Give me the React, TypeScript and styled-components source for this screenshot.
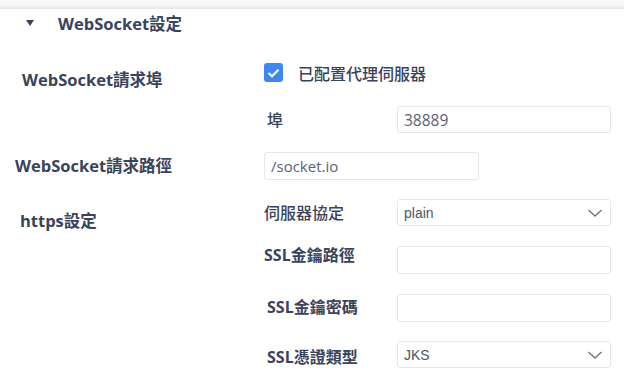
import React from "react";
import styled, { createGlobalStyle } from "styled-components";

const Global = createGlobalStyle`
  html, body { margin: 0; padding: 0; background: #fff; }
  body {
    font-family: "Open Sans", "Noto Sans CJK TC", sans-serif;
    color: #39435c;
  }
  * { box-sizing: border-box; }
`;

const Page = styled.div`
  width: 624px;
  height: 379px;
  overflow: hidden;
  background: #fff;
`;

const TopShade = styled.div`
  height: 9px;
  background: linear-gradient(to bottom, #fbfbfb 0%, #f3f3f3 60%, #e8e8e8 100%);
`;

const Header = styled.div`
  height: 29px;
  display: flex;
  align-items: center;
  padding-left: 26px;
  gap: 24px;
`;

const Caret = styled.span`
  width: 0;
  height: 0;
  border-left: 4.5px solid transparent;
  border-right: 4.5px solid transparent;
  border-top: 6px solid #39435c;
  margin-top: -2px;
`;

const HeaderTitle = styled.span`
  font-size: 16.5px;
  font-weight: 700;
  line-height: 20px;
`;

const Section = styled.div<{ $top?: number }>`
  display: grid;
  grid-template-columns: 264px 215px;
  margin-top: ${(p) => p.$top ?? 19}px;
`;

const MainLabel = styled.div<{ $x: number; $y?: number }>`
  padding-left: ${(p) => p.$x}px;
  padding-top: ${(p) => p.$y ?? 0}px;
  font-size: 16.5px;
  font-weight: 700;
  line-height: 20px;
  white-space: nowrap;
  align-self: ${(p) => (p.$y === undefined ? "center" : "start")};
`;

const Fields = styled.div`
  display: flex;
  flex-direction: column;
  gap: 19px;
`;

const CheckRow = styled.label`
  display: flex;
  align-items: center;
  gap: 15px;
  height: 19px;
  margin-top: 25px;
  margin-bottom: 5px;
`;

const CheckBox = styled.span`
  width: 19px;
  height: 19px;
  border-radius: 3px;
  background: #3f88f2;
  display: flex;
  align-items: center;
  justify-content: center;
`;

const CheckText = styled.span`
  font-size: 16px;
  font-weight: 500;
  line-height: 20px;
  margin-top: 3px;
  white-space: nowrap;
`;

const SubRow = styled.div`
  display: grid;
  grid-template-columns: 133px 214px;
  align-items: center;
`;

const SubLabel = styled.div<{ $x: number; $bold?: boolean; $shift?: number }>`
  padding-left: ${(p) => p.$x}px;
  font-size: 16px;
  line-height: 20px;
  font-weight: ${(p) => (p.$bold ? 700 : 500)};
  white-space: nowrap;
  margin-top: ${(p) => Math.max(0, (p.$shift ?? 0) * 2)}px;
  margin-bottom: ${(p) => Math.max(0, -(p.$shift ?? 0) * 2)}px;
`;

const Box = styled.div<{ $h: number; $w?: number }>`
  height: ${(p) => p.$h}px;
  width: ${(p) => p.$w ?? 214}px;
  border: 1px solid #e4e7ec;
  border-radius: 3px;
  display: flex;
  align-items: center;
  justify-content: space-between;
  padding: 0 7px 0 6px;
  background: #fff;
`;

const InputText = styled.span<{ $size?: number }>`
  font-size: ${(p) => p.$size ?? 15}px;
  color: #5b6173;
  line-height: 20px;
`;

const SelectText = styled.span`
  font-family: "Liberation Sans", Arial, sans-serif;
  font-size: 14px;
  color: #4e5566;
  line-height: 18px;
`;

const Chevron = () => (
  <svg width="16" height="10" viewBox="0 0 16 10" fill="none">
    <path d="M1.5 2 L8 8 L14.5 2" stroke="#6b7385" strokeWidth="1.3" />
  </svg>
);

const Select: React.FC<{ value: string; h: number }> = ({ value, h }) => (
  <Box $h={h}>
    <SelectText>{value}</SelectText>
    <Chevron />
  </Box>
);

const Input: React.FC<{ value?: string; h: number; w?: number; size?: number }> = ({ value, h, w, size }) => (
  <Box $h={h} $w={w}>
    <InputText $size={size}>{value}</InputText>
  </Box>
);

export default function App() {
  return (
    <Page>
      <Global />
      <TopShade />
      <Header>
        <Caret />
        <HeaderTitle>WebSocket設定</HeaderTitle>
      </Header>

      <Section $top={0}>
        <MainLabel $x={22} $y={32}>WebSocket請求埠</MainLabel>
        <Fields>
          <CheckRow>
            <CheckBox>
              <svg width="13" height="10" viewBox="0 0 13 10" fill="none">
                <path d="M1.5 5 L5 8.3 L11.5 1.7" stroke="#fff" strokeWidth="2" />
              </svg>
            </CheckBox>
            <CheckText>已配置代理伺服器</CheckText>
          </CheckRow>
          <SubRow>
            <SubLabel $x={3}>埠</SubLabel>
            <Input value="38889" h={27} size={15.5} />
          </SubRow>
        </Fields>
      </Section>

      <Section>
        <MainLabel $x={15}>WebSocket請求路徑</MainLabel>
        <Input value="/socket.io" h={28} w={215} />
      </Section>

      <Section>
        <MainLabel $x={20} $y={12}>https設定</MainLabel>
        <Fields>
          <SubRow>
            <SubLabel $x={0}>伺服器協定</SubLabel>
            <Select value="plain" h={27} />
          </SubRow>
          <SubRow>
            <SubLabel $x={0} $bold $shift={-5}>SSL金鑰路徑</SubLabel>
            <Input h={28} />
          </SubRow>
          <SubRow>
            <SubLabel $x={3} $bold $shift={-1}>SSL金鑰密碼</SubLabel>
            <Input h={28} />
          </SubRow>
          <SubRow>
            <SubLabel $x={3} $bold $shift={2}>SSL憑證類型</SubLabel>
            <Select value="JKS" h={27} />
          </SubRow>
        </Fields>
      </Section>
    </Page>
  );
}
